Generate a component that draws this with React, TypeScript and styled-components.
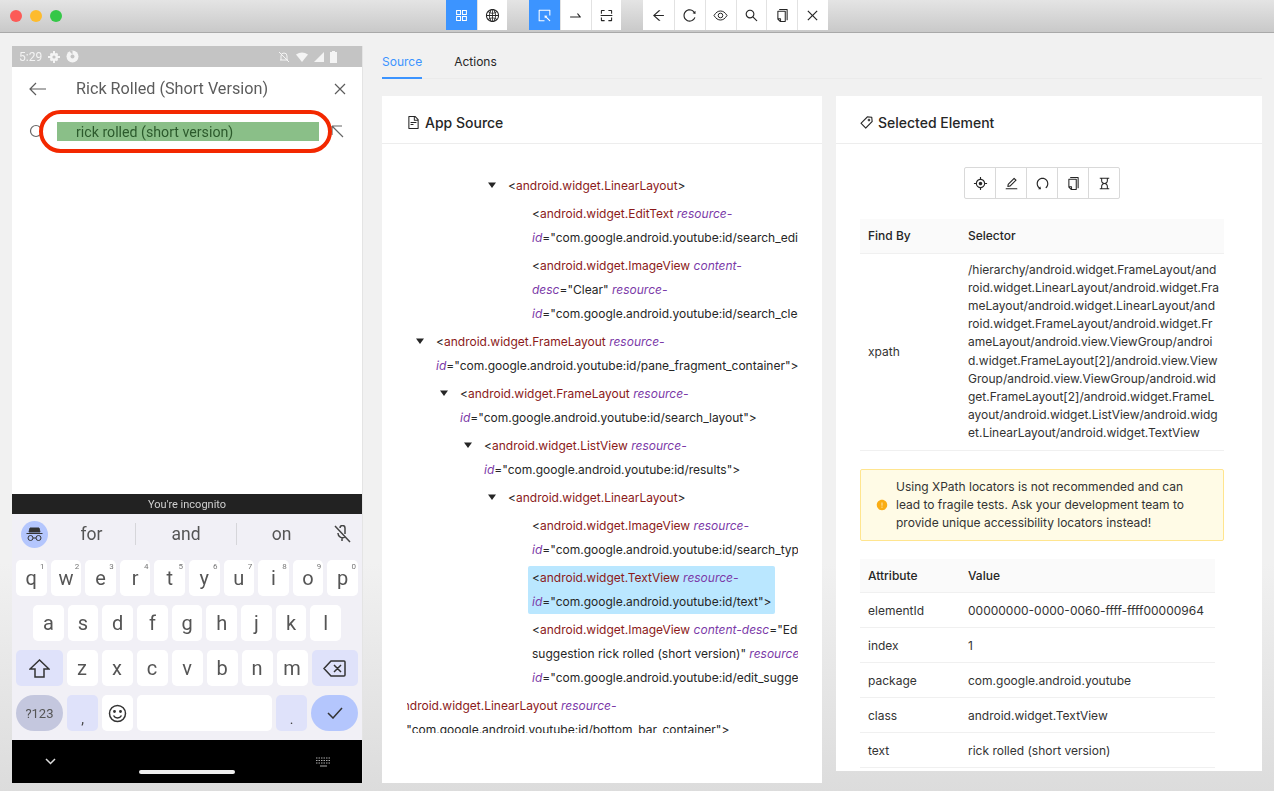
import { ReactNode } from "react"
import styled, { createGlobalStyle } from "styled-components"
import {
  AiOutlineAim,
  AiOutlineAppstore,
  AiOutlineArrowLeft,
  AiOutlineClose,
  AiOutlineCopy,
  AiOutlineEdit,
  AiOutlineFileText,
  AiOutlineGlobal,
  AiOutlineHourglass,
  AiOutlineReload,
  AiOutlineScan,
  AiOutlineSearch,
  AiOutlineSelect,
  AiOutlineSwapRight,
  AiOutlineTag,
  AiOutlineUndo,
  AiFillExclamationCircle,
} from "react-icons/ai"

const GlobalStyle = createGlobalStyle`
  html, body { margin: 0; padding: 0; height: 100%; overflow: hidden; }
  body { font-family: Inter, "Liberation Sans", sans-serif; color: #262626; }
  * { box-sizing: border-box; }
`

const Window = styled.div`
  width: 1274px;
  height: 791px;
  display: flex;
  flex-direction: column;
  overflow: hidden;
`

const TitleBar = styled.header`
  height: 33px;
  flex: none;
  display: flex;
  background: linear-gradient(#e4e4e4, #c9c9c9);
  border-bottom: 1px solid #a9a9a9;
`

const Lights = styled.div`
  display: flex;
  gap: 8px;
  padding: 10px 0 0 10px;
  width: 446px;
`

const Light = styled.span<{ $color: string }>`
  width: 12px;
  height: 12px;
  border-radius: 50%;
  background: ${({ $color }) => $color};
`

const ToolGroup = styled.div`
  display: flex;
  height: 30px;
  margin-right: 22px;
`

const ToolButton = styled.button<{ $active?: boolean }>`
  width: 30.7px;
  height: 30px;
  padding: 0;
  border: none;
  border-left: 1px solid ${({ $active }) => ($active ? "#3c94ff" : "#e2e2e2")};
  background: ${({ $active }) => ($active ? "#3c94ff" : "#fff")};
  color: ${({ $active }) => ($active ? "#fff" : "#262626")};
  display: flex;
  align-items: center;
  justify-content: center;
  font-size: 15px;
  &:first-child { border-left: none; }
`

const Main = styled.main`
  flex: 1;
  min-height: 0;
  display: flex;
  gap: 20px;
  padding: 13px 12px 8px;
  background: linear-gradient(#f1f1f1 70%, #dcdcdc);
`

/* phone */

const Phone = styled.section`
  position: relative;
  width: 350px;
  flex: none;
  box-shadow: 1px 0 0 #e4e4e4;
`

const PhoneScreen = styled.div`
  height: 100%;
  display: flex;
  flex-direction: column;
  background: #fff;
  font-family: Roboto, sans-serif;
  filter: blur(0.35px);
`

const StatusBar = styled.div`
  height: 21px;
  flex: none;
  background: #c4c4c4;
  color: #f4f4f4;
  display: flex;
  align-items: center;
  gap: 6px;
  padding: 0 25px 0 7px;
  font-size: 12px;
`

const StatusRight = styled.div`
  margin-left: auto;
  display: flex;
  align-items: center;
  gap: 6px;
`

const SearchHeader = styled.div`
  height: 43px;
  flex: none;
  display: flex;
  align-items: center;
  padding: 0 16px 0 17px;
  color: #5c5c5c;
  font-size: 16.2px;
`

const SearchTitle = styled.span`
  margin-left: 29px;
  flex: 1;
`

const SuggestionRow = styled.div`
  display: flex;
  align-items: center;
  height: 20px;
  margin-top: 11px;
  padding: 0 14px 0 17px;
  color: #666;
`

const SuggestionText = styled.span`
  width: 262px;
  height: 19px;
  margin-left: 14px;
  margin-right: 12px;
  padding-left: 19px;
  background: #8abf88;
  color: #2c5a2c;
  font-size: 14.2px;
  line-height: 20px;
`

const RedRing = styled.div`
  position: absolute;
  left: 27px;
  top: 64px;
  width: 293px;
  height: 43px;
  border: 4px solid #f32800;
  border-radius: 22px;
`

const PhoneSpacer = styled.div`
  flex: 1;
`

const IncognitoBar = styled.div`
  height: 20px;
  flex: none;
  background: #222;
  color: #cfcfcf;
  font-size: 11px;
  line-height: 21px;
  text-align: center;
`

const Keyboard = styled.div`
  height: 226px;
  flex: none;
  background: #f1f0f6;
  display: flex;
  flex-direction: column;
  padding: 0 4px;
`

const Suggestions = styled.div`
  height: 46px;
  flex: none;
  display: flex;
  align-items: center;
  padding: 0 7px 6px 5px;
  color: #555;
  font-size: 17.5px;
`

const IncognitoBadge = styled.span`
  width: 27px;
  height: 27px;
  border-radius: 50%;
  background: #b4c6fd;
  display: flex;
  align-items: center;
  justify-content: center;
  flex: none;
`

const Word = styled.span<{ $width: number; $divided?: boolean }>`
  width: ${({ $width }) => $width}px;
  flex: none;
  height: 22px;
  line-height: 22px;
  text-align: center;
  border-left: ${({ $divided }) => ($divided ? "1px solid #d6d6da" : "none")};
`

const MicSlot = styled.span`
  margin-left: auto;
  line-height: 0;
`

const KeyRow = styled.div<{ $inset?: number }>`
  display: flex;
  gap: 4px;
  height: 36px;
  margin-bottom: 9px;
  padding: 0 ${({ $inset }) => $inset ?? 0}px;
`

const Key = styled.span<{ $grow?: number; $fill?: string; $round?: boolean }>`
  position: relative;
  flex: ${({ $grow }) => $grow ?? 1} 1 0;
  border-radius: ${({ $round }) => ($round ? "18px" : "5px")};
  background: ${({ $fill }) => $fill ?? "#fff"};
  color: #555;
  font-size: 20px;
  display: flex;
  align-items: center;
  justify-content: center;
`

const PunctKey = styled(Key)`
  align-items: flex-end;
  padding-bottom: 4px;
  font-size: 14px;
  color: #444;
`

const KeyLabel = styled.span`
  font-size: 13px;
`

const KeyDigit = styled.sup`
  position: absolute;
  top: 3px;
  right: 2px;
  font-size: 8px;
  line-height: 1;
  color: #777;
`

const NavBar = styled.div`
  position: relative;
  flex: none;
  height: 43px;
  background: #000;
  display: flex;
  align-items: center;
  justify-content: space-between;
  padding: 0 31px 0 33px;
`

const HomePill = styled.span`
  position: absolute;
  left: 127px;
  bottom: 9px;
  width: 96px;
  height: 4px;
  border-radius: 2px;
  background: #eee;
`

/* right side */

const Inspector = styled.section`
  flex: 1;
  min-width: 0;
  display: flex;
  flex-direction: column;
`

const Tabs = styled.nav`
  flex: none;
  height: 33px;
  display: flex;
  gap: 32px;
  border-bottom: 1px solid #ebebeb;
  margin-bottom: 17px;
  font-size: 12px;
`

const Tab = styled.span<{ $active?: boolean }>`
  height: 33px;
  padding-top: 8px;
  color: ${({ $active }) => ($active ? "#3c94ff" : "#262626")};
  border-bottom: 2px solid ${({ $active }) => ($active ? "#3c94ff" : "transparent")};
`

const Panels = styled.div`
  flex: 1;
  min-height: 0;
  display: flex;
  gap: 14px;
  align-items: flex-start;
`

const Card = styled.article<{ $width: number; $height: number }>`
  width: ${({ $width }) => $width}px;
  height: ${({ $height }) => $height}px;
  flex: none;
  background: #fff;
  overflow: hidden;
`

const CardHeader = styled.h2<{ $inset: number }>`
  height: 48px;
  margin: 0;
  padding: 5px 0 0 ${({ $inset }) => $inset}px;
  display: flex;
  align-items: center;
  gap: 4px;
  border-bottom: 1px solid #ededed;
  font-size: 14px;
  font-weight: 500;
`

const TreeViewport = styled.div`
  margin: 30px 24px 0 25px;
  height: 559px;
  overflow: hidden;
  font-size: 12px;
  line-height: 24px;
`

const TreeInner = styled.div`
  margin-left: -43px;
`

const TreeRow = styled.div<{ $depth: number }>`
  display: flex;
  margin-bottom: 4px;
  padding-left: ${({ $depth }) => $depth * 24}px;
  white-space: nowrap;
`

const CaretCell = styled.span`
  width: 24px;
  flex: none;
  padding: 8px 0 0 3px;
  line-height: 0;
`

const TreeNode = styled.div<{ $selected?: boolean }>`
  margin-left: -4px;
  padding: 0 ${({ $selected }) => ($selected ? "3px" : "4px")} 0 4px;
  border-radius: 2px;
  background: ${({ $selected }) => ($selected ? "#bae7ff" : "transparent")};
`

const TagName = styled.span`
  color: #8b1a1a;
`

const AttrName = styled.i`
  color: #7b3aa8;
`

const PanelBody = styled.div`
  padding: 23px 38px 0 24px;
  font-size: 12px;
`

const ActionGroup = styled.div`
  display: flex;
  justify-content: center;
  margin-bottom: 20px;
`

const ActionBox = styled.div`
  display: flex;
  border: 1px solid #d9d9d9;
  border-radius: 2px;
`

const ActionButton = styled.span`
  width: 31px;
  height: 30px;
  display: flex;
  align-items: center;
  justify-content: center;
  font-size: 15px;
  border-left: 1px solid #d9d9d9;
  &:first-child { border-left: none; width: 30px; }
`

const Table = styled.table<{ $width?: number }>`
  width: ${({ $width }) => $width ?? 364}px;
  border-collapse: collapse;
  table-layout: fixed;
`

const HeadCell = styled.th<{ $width?: number }>`
  position: relative;
  width: ${({ $width }) => ($width ? `${$width}px` : "auto")};
  height: 34px;
  padding: 0 8px;
  background: #fafafa;
  border-bottom: 1px solid #f0f0f0;
  font-weight: 500;
  text-align: left;
  & + &::before {
    content: "";
    position: absolute;
    left: 0;
    top: 7px;
    bottom: 7px;
    width: 1px;
    background: #e8e8e8;
  }
`

const Cell = styled.td`
  height: 35px;
  padding: 0 8px;
  border-bottom: 1px solid #f0f0f0;
  color: #333;
`

const XpathLine = styled.span`
  display: block;
  line-height: 18.1px;
  white-space: nowrap;
`

const XpathCell = styled(Cell)`
  height: 197px;
`

const Alert = styled.div`
  height: 72px;
  margin: 18px 0;
  padding: 0 15px;
  display: flex;
  align-items: center;
  gap: 8px;
  background: #fffbe6;
  border: 1px solid #ffe58f;
  border-radius: 2px;
  line-height: 18px;
  color: #333;
  svg { flex: none; color: #faad14; }
`

const Caret = () => (
  <svg width="10" height="7" viewBox="0 0 10 7">
    <path d="M1 0.5h8l-4 5.5z" fill="#262626" />
  </svg>
)

type TreeItem = { depth: number; caret?: boolean; selected?: boolean; lines: ReactNode[] }

const PKG = "com.google.android.youtube:id"

const tag = (name: string) => (
  <>
    &lt;<TagName>android.widget.{name}</TagName>
  </>
)

const resourceId = (value: string) => (
  <>
    <AttrName>id</AttrName>="{PKG}/{value}
  </>
)

const treeItems: TreeItem[] = [
  { depth: 5, caret: true, lines: [<>{tag("LinearLayout")}&gt;</>] },
  {
    depth: 6,
    lines: [<>{tag("EditText")} <AttrName>resource-</AttrName></>, resourceId('search_edit_text">')],
  },
  {
    depth: 6,
    lines: [
      <>{tag("ImageView")} <AttrName>content-</AttrName></>,
      <><AttrName>desc</AttrName>="Clear" <AttrName>resource-</AttrName></>,
      resourceId('search_clear">'),
    ],
  },
  {
    depth: 2,
    caret: true,
    lines: [<>{tag("FrameLayout")} <AttrName>resource-</AttrName></>, resourceId('pane_fragment_container">')],
  },
  {
    depth: 3,
    caret: true,
    lines: [<>{tag("FrameLayout")} <AttrName>resource-</AttrName></>, resourceId('search_layout">')],
  },
  {
    depth: 4,
    caret: true,
    lines: [<>{tag("ListView")} <AttrName>resource-</AttrName></>, resourceId('results">')],
  },
  { depth: 5, caret: true, lines: [<>{tag("LinearLayout")}&gt;</>] },
  {
    depth: 6,
    lines: [<>{tag("ImageView")} <AttrName>resource-</AttrName></>, resourceId('search_type_icon">')],
  },
  {
    depth: 6,
    selected: true,
    lines: [<>{tag("TextView")} <AttrName>resource-</AttrName></>, resourceId('text">')],
  },
  {
    depth: 6,
    lines: [
      <>{tag("ImageView")} <AttrName>content-desc</AttrName>="Edit</>,
      <>suggestion rick rolled (short version)" <AttrName>resource-</AttrName></>,
      resourceId('edit_suggestion">'),
    ],
  },
  {
    depth: 0,
    lines: [<>{tag("LinearLayout")} <AttrName>resource-</AttrName></>, resourceId('bottom_bar_container">')],
  },
]

const xpathLines = [
  "/hierarchy/android.widget.FrameLayout/and",
  "roid.widget.LinearLayout/android.widget.Fra",
  "meLayout/android.widget.LinearLayout/and",
  "roid.widget.FrameLayout/android.widget.Fr",
  "ameLayout/android.view.ViewGroup/androi",
  "d.widget.FrameLayout[2]/android.view.View",
  "Group/android.view.ViewGroup/android.wid",
  "get.FrameLayout[2]/android.widget.FrameL",
  "ayout/android.widget.ListView/android.widg",
  "et.LinearLayout/android.widget.TextView",
]

const attributes = [
  ["elementId", "00000000-0000-0060-ffff-ffff00000964"],
  ["index", "1"],
  ["package", "com.google.android.youtube"],
  ["class", "android.widget.TextView"],
  ["text", "rick rolled (short version)"],
]

const keyRows = [
  ["q", "w", "e", "r", "t", "y", "u", "i", "o", "p"],
  ["a", "s", "d", "f", "g", "h", "j", "k", "l"],
]
const digits = ["1", "2", "3", "4", "5", "6", "7", "8", "9", "0"]

const App = () => (
  <Window>
    <GlobalStyle />
    <TitleBar>
      <Lights>
        <Light $color="#fc5b57" />
        <Light $color="#fdbb2d" />
        <Light $color="#35c748" />
      </Lights>
      <ToolGroup>
        <ToolButton $active><AiOutlineAppstore /></ToolButton>
        <ToolButton><AiOutlineGlobal /></ToolButton>
      </ToolGroup>
      <ToolGroup>
        <ToolButton $active><AiOutlineSelect /></ToolButton>
        <ToolButton><AiOutlineSwapRight /></ToolButton>
        <ToolButton><AiOutlineScan /></ToolButton>
      </ToolGroup>
      <ToolGroup>
        <ToolButton><AiOutlineArrowLeft /></ToolButton>
        <ToolButton><AiOutlineReload /></ToolButton>
        <ToolButton>
          <svg width="15" height="15" viewBox="0 0 15 15" fill="none" stroke="currentColor">
            <path d="M1 7.500C3 4.300 5 3 7.500 3S12 4.300 14 7.500C12 10.700 10 12 7.500 12S3 10.700 1 7.500z" />
            <circle cx="7.500" cy="7.500" r="2.300" />
          </svg>
        </ToolButton>
        <ToolButton><AiOutlineSearch /></ToolButton>
        <ToolButton><AiOutlineCopy /></ToolButton>
        <ToolButton><AiOutlineClose /></ToolButton>
      </ToolGroup>
    </TitleBar>
    <Main>
      <Phone>
        <PhoneScreen>
          <StatusBar>
            5:29
            <svg width="12" height="12" viewBox="0 0 12 12" fill="#f4f4f4">
              <path d="M5 0h2v12h-2zM0 5h12v2h-12zM1.800 3.200l1.400-1.400 7 7-1.400 1.400zM8.800 1.800l1.400 1.400-7 7-1.400-1.400z" />
              <circle cx="6" cy="6" r="4" />
              <circle cx="6" cy="6" r="1.600" fill="#c4c4c4" />
            </svg>
            <svg width="13" height="13" viewBox="0 0 13 13">
              <circle cx="6.5" cy="6.5" r="6" fill="#f4f4f4" />
              <circle cx="6.5" cy="6.5" r="2" fill="#c4c4c4" />
              <path d="M6.500 0.500a6 6 0 00-3 1l3 3z" fill="#c4c4c4" />
            </svg>
            <StatusRight>
              <svg width="12" height="12" viewBox="0 0 12 12" fill="none" stroke="#f4f4f4">
                <path d="M3 9V5a3 3 0 016 0v4M2 9h8M1 1l10 10" />
              </svg>
              <svg width="12" height="10" viewBox="0 0 12 10" fill="#f4f4f4">
                <path d="M0 2.500Q6-1.500 12 2.500L6 10z" />
              </svg>
              <svg width="10" height="10" viewBox="0 0 10 10" fill="#f4f4f4">
                <path d="M10 0v10h-10z" />
              </svg>
              <svg width="7" height="12" viewBox="0 0 7 12" fill="#f4f4f4">
                <path d="M2 0h3v1h2v11h-7v-11h2z" />
              </svg>
            </StatusRight>
          </StatusBar>
          <SearchHeader>
            <svg width="18" height="14" viewBox="0 0 18 14" fill="none" stroke="#5c5c5c" strokeWidth="1.2">
              <path d="M17 7H1M7 1L1 7l6 6" />
            </svg>
            <SearchTitle>Rick Rolled (Short Version)</SearchTitle>
            <svg width="12" height="12" viewBox="0 0 12 12" stroke="#5c5c5c" strokeWidth="1.2">
              <path d="M1 1l10 10M11 1L1 11" />
            </svg>
          </SearchHeader>
          <SuggestionRow>
            <svg width="14" height="14" viewBox="0 0 14 14" fill="none" stroke="#666" strokeWidth="1.2">
              <circle cx="7" cy="7" r="5.500" />
            </svg>
            <SuggestionText>rick rolled (short version)</SuggestionText>
            <svg width="13" height="13" viewBox="0 0 13 13" fill="none" stroke="#666" strokeWidth="1.2">
              <path d="M1 1h10M1 1v9M1 1l11 11" />
            </svg>
          </SuggestionRow>
          <PhoneSpacer />
          <IncognitoBar>You're incognito</IncognitoBar>
          <Keyboard>
            <Suggestions>
              <IncognitoBadge>
                <svg width="17" height="15" viewBox="0 0 17 15" fill="none" stroke="#333">
                  <path d="M4 1h9l1 4H3z" fill="#333" />
                  <path d="M0.500 6.500h16" />
                  <circle cx="4.500" cy="11" r="2.500" />
                  <circle cx="12.500" cy="11" r="2.500" />
                  <path d="M7 11h3" />
                </svg>
              </IncognitoBadge>
              <Word $width={87}>for</Word>
              <Word $width={101} $divided>and</Word>
              <Word $width={90} $divided>on</Word>
              <MicSlot>
                <svg width="18" height="18" viewBox="0 0 18 18" fill="none" stroke="#444" strokeWidth="1.500">
                  <path d="M2 1l15 16M7 3a2.500 2.500 0 015 0v6M5 8a4.500 4.500 0 007 4M9 13v3" />
                </svg>
              </MicSlot>
            </Suggestions>
            {keyRows.map((row, rowIndex) => (
              <KeyRow key={row[0]} $inset={rowIndex === 1 ? 17 : 0}>
                {row.map((letter, i) => (
                  <Key key={letter}>
                    {letter}
                    {rowIndex === 0 && <KeyDigit>{digits[i]}</KeyDigit>}
                  </Key>
                ))}
              </KeyRow>
            ))}
            <KeyRow>
              <Key $grow={1.5} $fill="#dfe2fa">
                <svg width="21" height="19" viewBox="0 0 21 19" fill="none" stroke="#333" strokeWidth="1.500">
                  <path d="M10.500 1L1 10h5v8h9v-8h5z" />
                </svg>
              </Key>
              {["z", "x", "c", "v", "b", "n", "m"].map(letter => (
                <Key key={letter}>{letter}</Key>
              ))}
              <Key $grow={1.5} $fill="#dfe2fa">
                <svg width="23" height="17" viewBox="0 0 23 17" fill="none" stroke="#333" strokeWidth="1.500">
                  <path d="M8 1h13a1 1 0 011 1v13a1 1 0 01-1 1H8L1 8.500zM11 5l7 7M18 5l-7 7" />
                </svg>
              </Key>
            </KeyRow>
            <KeyRow>
              <Key $grow={1.5} $fill="#c4c7de" $round>
                <KeyLabel>?123</KeyLabel>
              </Key>
              <PunctKey $fill="#dfe2fa">,</PunctKey>
              <Key>
                <svg width="19" height="19" viewBox="0 0 19 19" fill="none" stroke="#333" strokeWidth="1.500">
                  <circle cx="9.500" cy="9.500" r="8" />
                  <path d="M5.500 11.500a4.500 4.500 0 008 0" />
                  <circle cx="6.500" cy="7.500" r="0.700" />
                  <circle cx="12.500" cy="7.500" r="0.700" />
                </svg>
              </Key>
              <Key $grow={4.3} />
              <PunctKey $fill="#dfe2fa">.</PunctKey>
              <Key $grow={1.5} $fill="#b4c6fd" $round>
                <svg width="16" height="12" viewBox="0 0 16 12" fill="none" stroke="#333" strokeWidth="1.500">
                  <path d="M1 6l5 5L15 1" />
                </svg>
              </Key>
            </KeyRow>
          </Keyboard>
          <NavBar>
            <svg width="11" height="7" viewBox="0 0 11 7" fill="none" stroke="#ddd" strokeWidth="1.500">
              <path d="M1 1l4.500 4.500L10 1" />
            </svg>
            <HomePill />
            <svg width="15" height="10" viewBox="0 0 15 10" stroke="#aaa" strokeDasharray="1.500 1">
              <path d="M0 1h15M0 3.500h15M0 6h15" />
              <path d="M4 9h7" strokeDasharray="none" />
            </svg>
          </NavBar>
        </PhoneScreen>
        <RedRing />
      </Phone>
      <Inspector>
        <Tabs>
          <Tab $active>Source</Tab>
          <Tab>Actions</Tab>
        </Tabs>
        <Panels>
          <Card $width={440} $height={687}>
            <CardHeader $inset={24}>
              <AiOutlineFileText size={15} />
              App Source
            </CardHeader>
            <TreeViewport>
              <TreeInner>
                {treeItems.map((item, i) => (
                  <TreeRow key={i} $depth={item.depth}>
                    <CaretCell>{item.caret && <Caret />}</CaretCell>
                    <TreeNode $selected={item.selected}>
                      {item.lines.map((line, j) => (
                        <div key={j}>{line}</div>
                      ))}
                    </TreeNode>
                  </TreeRow>
                ))}
              </TreeInner>
            </TreeViewport>
          </Card>
          <Card $width={426} $height={675}>
            <CardHeader $inset={23}>
              <AiOutlineTag size={15} />
              Selected Element
            </CardHeader>
            <PanelBody>
              <ActionGroup>
                <ActionBox>
                  <ActionButton><AiOutlineAim /></ActionButton>
                  <ActionButton><AiOutlineEdit /></ActionButton>
                  <ActionButton><AiOutlineUndo /></ActionButton>
                  <ActionButton><AiOutlineCopy /></ActionButton>
                  <ActionButton><AiOutlineHourglass /></ActionButton>
                </ActionBox>
              </ActionGroup>
              <Table>
                <thead>
                  <tr>
                    <HeadCell $width={100}>Find By</HeadCell>
                    <HeadCell>Selector</HeadCell>
                  </tr>
                </thead>
                <tbody>
                  <tr>
                    <XpathCell>xpath</XpathCell>
                    <XpathCell>
                      {xpathLines.map(line => (
                        <XpathLine key={line}>{line}</XpathLine>
                      ))}
                    </XpathCell>
                  </tr>
                </tbody>
              </Table>
              <Alert>
                <AiFillExclamationCircle size={12} />
                <span>
                  Using XPath locators is not recommended and can lead to fragile tests. Ask your development team to provide unique accessibility locators instead!
                </span>
              </Alert>
              <Table $width={355}>
                <thead>
                  <tr>
                    <HeadCell $width={100}>Attribute</HeadCell>
                    <HeadCell>Value</HeadCell>
                  </tr>
                </thead>
                <tbody>
                  {attributes.map(([name, value]) => (
                    <tr key={name}>
                      <Cell>{name}</Cell>
                      <Cell>{value}</Cell>
                    </tr>
                  ))}
                </tbody>
              </Table>
            </PanelBody>
          </Card>
        </Panels>
      </Inspector>
    </Main>
  </Window>
)

export default App
